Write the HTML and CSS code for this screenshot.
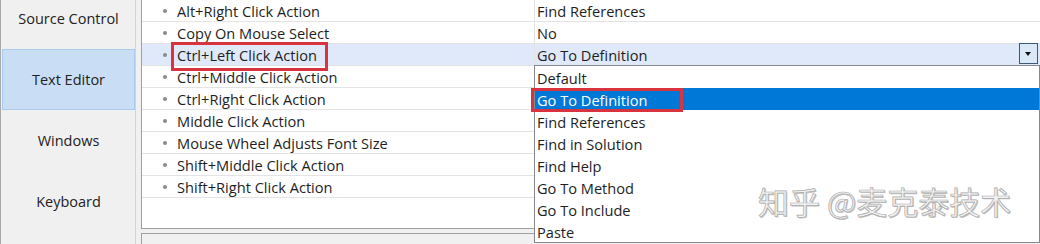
FILE: index.html
```html
<!DOCTYPE html>
<html>
<head>
	<title>Options - Text Editor</title>
	<meta charset="utf-8">
	<link rel="stylesheet" href="styles.css">
</head>
<body>
	<div class="window">
		<nav class="sidebar">
			<a class="tab">Source Control</a>
			<a class="tab active">Text Editor</a>
			<a class="tab">Windows</a>
			<a class="tab">Keyboard</a>
		</nav>
		<main class="content">
			<div class="grid">
				<div class="row"><div class="name">Alt+Right Click Action</div><div class="value">Find References</div></div>
				<div class="row"><div class="name">Copy On Mouse Select</div><div class="value">No</div></div>
				<div class="row current"><div class="name">Ctrl+Left Click Action</div><div class="value">Go To Definition<span class="drop-btn"></span></div></div>
				<div class="row"><div class="name">Ctrl+Middle Click Action</div><div class="value"></div></div>
				<div class="row"><div class="name">Ctrl+Right Click Action</div><div class="value"></div></div>
				<div class="row"><div class="name">Middle Click Action</div><div class="value"></div></div>
				<div class="row"><div class="name">Mouse Wheel Adjusts Font Size</div><div class="value"></div></div>
				<div class="row"><div class="name">Shift+Middle Click Action</div><div class="value"></div></div>
				<div class="row"><div class="name">Shift+Right Click Action</div><div class="value"></div></div>
			</div>
			<div class="details"></div>
		</main>
	</div>

	<!-- open combo list -->
	<ul class="dropdown">
		<li>Default</li>
		<li class="selected">Go To Definition</li>
		<li>Find References</li>
		<li>Find in Solution</li>
		<li>Find Help</li>
		<li>Go To Method</li>
		<li>Go To Include</li>
		<li>Paste</li>
	</ul>

	<span class="mark mark-name"></span>
	<span class="mark mark-item"></span>
	<div class="watermark">知乎 @麦克泰技术</div>
</body>
</html>
```

FILE: styles.css
```css
body {
	margin: 0;
	width: 1040px;
	height: 244px;
	overflow: hidden;
	position: relative;
	background: #f0f0f0;
	font-family: "Open Sans", "Noto Sans", sans-serif;
	font-size: 14.6px;
	color: #1e1e1e;
}
.window {
	display: flex;
	height: 244px;
}

/* left tabs */
.sidebar {
	width: 133px;
	border-left: 1px solid #a8a8a8;
	border-right: 1px solid #d4d4d4;
	background: #f0f0f0;
	display: flex;
	flex-direction: column;
	margin-top: -12px;
	padding-left: 1px;
	box-sizing: content-box;
}
.tab {
	height: 61px;
	display: flex;
	align-items: center;
	justify-content: center;
	font-size: 14.5px;
	color: #222;
	box-sizing: border-box;
	border: 1px solid transparent;
}
.tab.active {
	background: #c9def5;
	border-color: #a9cbee;
}

/* property grid */
.content {
	margin-left: 5px;
	flex: 1;
	display: flex;
	flex-direction: column;
}
.grid {
	height: 228px;
	background: #fff;
	border-left: 1px solid #a0a0a0;
	border-bottom: 1px solid #a0a0a0;
}
.row {
	display: flex;
	height: 22px;
	box-sizing: border-box;
	border-bottom: 1px solid #e3e3e3;
	line-height: 23px;
}
.row.current {
	background: #dfe9f9;
}
.name {
	width: 393px;
	box-sizing: border-box;
	padding-left: 35px;
	border-right: 1px solid #e3e3e3;
	position: relative;
}
.name::before {
	content: "";
	position: absolute;
	left: 21px;
	top: 9px;
	width: 4px;
	height: 4px;
	border-radius: 50%;
	background: #8a8a8a;
}
.value {
	flex: 1;
	padding-left: 2px;
	position: relative;
}
.drop-btn {
	position: absolute;
	right: 2px;
	top: -1px;
	width: 17px;
	height: 19px;
	border: 1px solid #3c5a78;
	background: #dbe8f8;
}
.drop-btn::after {
	content: "";
	position: absolute;
	left: 5px;
	top: 8px;
	border-left: 3.5px solid transparent;
	border-right: 3.5px solid transparent;
	border-top: 4px solid #111;
}
.details {
	margin-top: 4px;
	flex: 1;
	border-top: 1px solid #a0a0a0;
	border-left: 1px solid #a0a0a0;
	background: #f0f0f0;
}

/* combo list */
.dropdown {
	position: absolute;
	left: 534px;
	top: 65px;
	width: 504px;
	margin: 0;
	padding: 0;
	list-style: none;
	background: #fff;
	border: 1px solid #828790;
}
.dropdown li {
	height: 22px;
	line-height: 25px;
	padding-left: 2px;
}
.dropdown li.selected {
	background: #0078d7;
	color: #fff;
}

/* red annotation boxes */
.mark {
	position: absolute;
	border: 3px solid #d8343f;
	box-sizing: border-box;
}
.mark-name {
	left: 171px;
	top: 42px;
	width: 157px;
	height: 29px;
}
.mark-item {
	left: 531px;
	top: 88px;
	width: 152px;
	height: 24px;
}

.watermark {
	position: absolute;
	left: 758px;
	top: 178px;
	font-family: "Noto Sans CJK SC", sans-serif;
	font-size: 31px;
	color: #f2f2f2;
	-webkit-text-stroke: 0.7px #aaaaaa;
	text-shadow: 1px 1px 0 #c4c4c4;
}
```
